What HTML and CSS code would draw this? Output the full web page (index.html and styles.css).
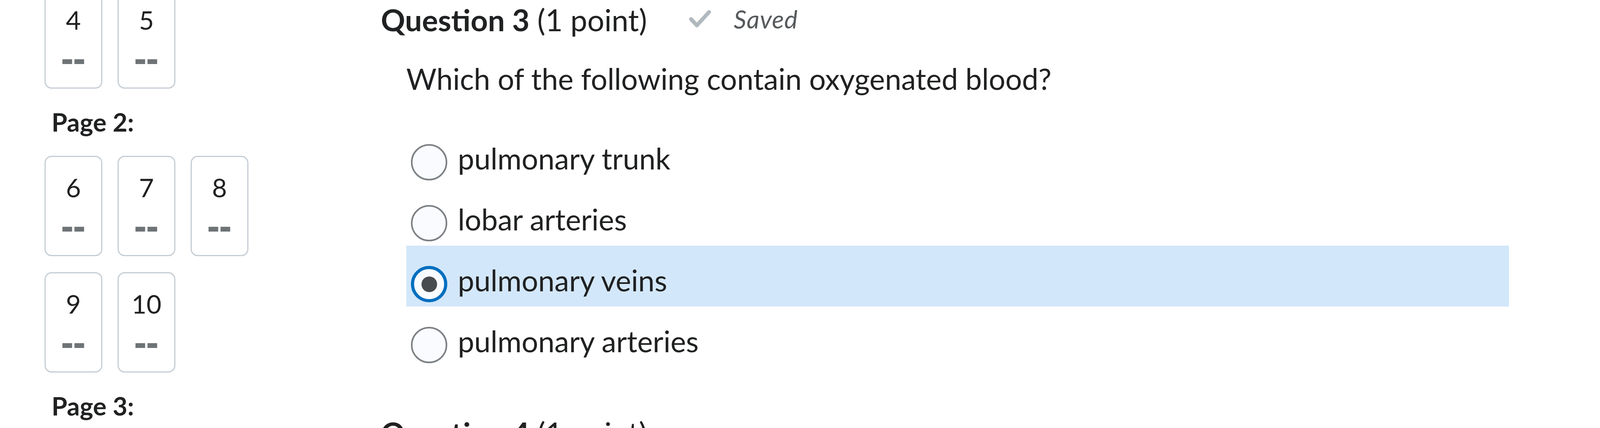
FILE: index.html
```html
<!DOCTYPE html>
<html lang="en">
<head>
    <meta charset="UTF-8">
    <title>Quiz - Question 3</title>
    <link rel="stylesheet" href="styles.css">
</head>
<body>

    <div class="page">
        <aside class="question-nav">
            <div class="cards">
                <div class="card"><span class="num">4</span><span class="dash">--</span></div>
                <div class="card"><span class="num">5</span><span class="dash">--</span></div>
            </div>
            <h3 class="page-label">Page 2:</h3>
            <div class="cards">
                <div class="card"><span class="num">6</span><span class="dash">--</span></div>
                <div class="card"><span class="num">7</span><span class="dash">--</span></div>
                <div class="card"><span class="num">8</span><span class="dash">--</span></div>
                <div class="card"><span class="num">9</span><span class="dash">--</span></div>
                <div class="card"><span class="num">10</span><span class="dash">--</span></div>
            </div>
            <h3 class="page-label">Page 3:</h3>
        </aside>

        <main class="quiz">
            <section class="question">
                <div class="q-head">
                    <h2 class="q-title"><b>Question 3</b> (1 point)</h2>
                    <span class="saved">
                        <svg class="check" width="56" height="44" viewBox="0 0 56 44">
                            <polyline points="5,23 20,39 51,5" fill="none" stroke="#b1b9be" stroke-width="10" stroke-linecap="round" stroke-linejoin="round"/>
                        </svg>
                        Saved
                    </span>
                </div>
                <p class="prompt">Which of the following contain oxygenated blood?</p>
                <div class="options">
                    <label class="option"><span class="radio"></span><span class="opt-text">pulmonary trunk</span></label>
                    <label class="option"><span class="radio"></span><span class="opt-text">lobar arteries</span></label>
                    <label class="option selected"><span class="radio checked"></span><span class="opt-text">pulmonary veins</span></label>
                    <label class="option"><span class="radio"></span><span class="opt-text">pulmonary arteries</span></label>
                </div>
            </section>

            <section class="question">
                <div class="q-head">
                    <h2 class="q-title"><b>Question 4</b> (1 point)</h2>
                </div>
            </section>
        </main>
    </div>

</body>
</html>
```

FILE: styles.css
```css
body { margin: 0; padding: 0; background: white; color: #202122; font-family: Lato, "Open Sans", sans-serif; overflow: hidden; }
.page { display: flex; height: 1096px; overflow: hidden; }

/* left side: question cards grouped by page */
.question-nav { width: 975px; box-sizing: border-box; padding-left: 114px; margin-top: -30px; flex-shrink: 0; }
.cards { display: grid; grid-template-columns: repeat(3, 148px); column-gap: 39px; row-gap: 41px; }
.card { height: 257px; box-sizing: border-box; border: 3px solid #c5cdd4; border-radius: 18px; display: flex; flex-direction: column; align-items: center; padding-top: 38px; }
.num { font-size: 66px; line-height: 79px; }
.dash { font-size: 80px; font-weight: bold; color: #6e7376; -webkit-text-stroke: 4px #6e7376; line-height: 40px; margin-top: 41px; letter-spacing: 1px; }
.page-label { font-size: 65px; font-weight: bold; margin: 46px 0 0 18px; line-height: 78px; height: 126px; }

/* right side: the question itself */
.quiz { flex: 1; padding-top: 3px; }
.q-head { display: flex; align-items: center; }
.q-title { font-size: 77px; font-weight: normal; margin: 0; line-height: 94px; }
.q-title b { font-weight: bold; }
.saved { display: flex; align-items: center; margin-left: 108px; font-size: 64px; letter-spacing: 1px; font-style: italic; color: #565a5c; gap: 58px; margin-top: -4px; }
.prompt { font-size: 75px; margin: 60px 0 0 65px; line-height: 89px; }
.options { margin: 71px 0 0 65px; width: 2823px; }
.option { display: flex; align-items: center; padding: 52px 12px 11px; gap: 27px; font-size: 75px; }
.option.selected { background-color: #d3e7fa; }
.opt-text { margin-bottom: 20px; line-height: 69px; }
.radio { width: 93px; height: 93px; box-sizing: border-box; border-radius: 50%; border: 4px solid #7c8083; background: #f9fbff; flex-shrink: 0; display: flex; align-items: center; justify-content: center; }
.radio.checked { border: 8px solid #006fbf; }
.radio.checked::after { content: ""; width: 40px; height: 40px; border-radius: 50%; background: #494c4e; }
.question + .question { margin-top: 120px; }
```
